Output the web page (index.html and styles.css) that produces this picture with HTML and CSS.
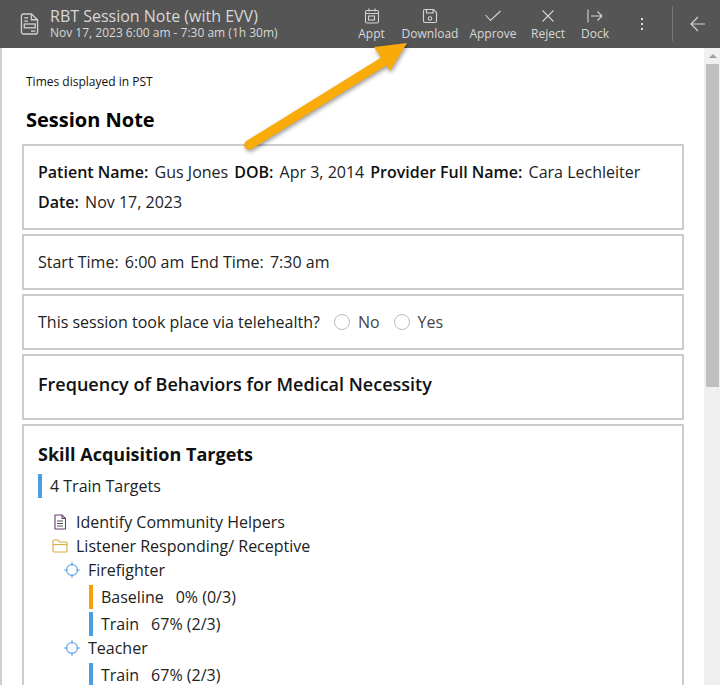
FILE: index.html
```html
<!DOCTYPE html>
<html lang="en">
<head>
<meta charset="utf-8">
<title>RBT Session Note</title>
<link rel="stylesheet" href="styles.css">
</head>
<body>
<div class="app">
  <header class="topbar">
    <div class="doc">
      <svg class="doc-icon" viewBox="0 0 20 24" fill="none" stroke="#d0d0d0" stroke-width="1.4"><path d="M1.500 3.500a2 2 0 0 1 2-2h8.500l6.500 6v13a2 2 0 0 1-2 2h-13a2 2 0 0 1-2-2z"/><path d="M12 1.500v6h6.500M4.500 5.500h4M4.500 9h4"/><rect x="4.500" y="12" width="11.500" height="4"/><path d="M11.500 19.500h4.500"/></svg>
      <div class="doc-text">
        <div class="doc-title">RBT Session Note (with EVV)</div>
        <div class="doc-sub">Nov 17, 2023 6:00 am - 7:30 am (1h 30m)</div>
      </div>
    </div>
    <nav class="actions">
      <div class="action a-appt"><svg viewBox="0 0 16 16" fill="none" stroke="#d4d4d4" stroke-width="1.1"><rect x="1.500" y="2.500" width="13" height="12.500" rx="1.500"/><path d="M1.500 5.500h13M5 .5v3M11 .5v3"/><rect x="4.500" y="8" width="6" height="4"/></svg><span>Appt</span></div>
      <div class="action a-down"><svg viewBox="0 0 16 16" fill="none" stroke="#d4d4d4" stroke-width="1.1"><path d="M1.500 3a1.500 1.500 0 0 1 1.500-1.500h8.500l3 3V13a1.500 1.500 0 0 1-1.500 1.500H3A1.500 1.500 0 0 1 1.500 13z"/><path d="M4.500 1.500v3.500h6.500V1.500"/><circle cx="8" cy="10.500" r="1.800"/></svg><span>Download</span></div>
      <div class="action a-appr"><svg viewBox="0 0 16 16" fill="none" stroke="#d4d4d4" stroke-width="1.1"><path d="M.5 7l5 5.500L15.500 3"/></svg><span>Approve</span></div>
      <div class="action a-rej"><svg viewBox="0 0 16 16" fill="none" stroke="#d4d4d4" stroke-width="1.1"><path d="M2.500 2.500l11 11M13.500 2.500l-11 11"/></svg><span>Reject</span></div>
      <div class="action a-dock"><svg viewBox="0 0 16 16" fill="none" stroke="#d4d4d4" stroke-width="1.1"><path d="M1 1.500v13M4 8h11M10.500 3.500L15 8l-4.500 4.500"/></svg><span>Dock</span></div>
    </nav>
    <div class="more"><i></i><i></i><i></i></div>
    <div class="back"><svg viewBox="0 0 16 16" fill="none" stroke="#d4d4d4" stroke-width="1.2"><path d="M15 8H1M8 1L1 8l7 7"/></svg></div>
  </header>
  <div class="body-row">
    <main class="content">
      <p class="tz">Times displayed in PST</p>
      <h1 class="page-title">Session Note</h1>
      <section class="card card-patient">
        <div class="line">
          <span class="pair"><b>Patient Name:</b> Gus Jones</span>
          <span class="pair"><b>DOB:</b> Apr 3, 2014</span>
          <span class="pair"><b>Provider Full Name:</b> Cara Lechleiter</span>
        </div>
        <div class="line"><span class="pair"><b>Date:</b> Nov 17, 2023</span></div>
      </section>
      <section class="card card-row">
        <div class="line">
          <span class="pair"><span class="lab">Start Time:</span> 6:00 am</span>
          <span class="pair"><span class="lab">End Time:</span> 7:30 am</span>
        </div>
      </section>
      <section class="card card-row">
        <div class="line tele">
          <span>This session took place via telehealth?</span>
          <span class="radio"></span><span class="opt">No</span>
          <span class="radio"></span><span class="opt">Yes</span>
        </div>
      </section>
      <section class="card card-heading">
        <h2>Frequency of Behaviors for Medical Necessity</h2>
      </section>
      <section class="card card-skill">
        <h2 class="strong">Skill Acquisition Targets</h2>
        <div class="phase phase-top">4 Train Targets</div>
        <ul class="tree">
          <li class="node lvl1">
            <svg class="ico" viewBox="0 0 14 16" fill="none" stroke="#6b3f70" stroke-width="1.1"><path d="M2 1h7l3.500 3.500V15H2z"/><path d="M9 1v3.500h3.500"/><path d="M4 7h6M4 9.500h6M4 12h6" stroke="#555"/></svg>
            Identify Community Helpers
          </li>
          <li class="node lvl1">
            <svg class="ico" viewBox="0 0 16 14" fill="none" stroke="#d9ad3c" stroke-width="1.1"><path d="M1 3V2a1 1 0 0 1 1-1h4l1.500 2H14a1 1 0 0 1 1 1v8a1 1 0 0 1-1 1H2a1 1 0 0 1-1-1z"/><path d="M1 5.500h14"/></svg>
            Listener Responding/ Receptive
          </li>
          <li class="node lvl2">
            <svg class="ico" viewBox="0 0 16 16" fill="none" stroke="#5ea3e6" stroke-width="1.1"><circle cx="8" cy="8" r="5.500"/><path d="M8 0v4M8 12v4M0 8h4M12 8h4"/></svg>
            Firefighter
          </li>
          <li class="phase phase-base">Baseline<span class="score">0% (0/3)</span></li>
          <li class="phase phase-train">Train<span class="score">67% (2/3)</span></li>
          <li class="node lvl2">
            <svg class="ico" viewBox="0 0 16 16" fill="none" stroke="#5ea3e6" stroke-width="1.1"><circle cx="8" cy="8" r="5.500"/><path d="M8 0v4M8 12v4M0 8h4M12 8h4"/></svg>
            Teacher
          </li>
          <li class="phase phase-train">Train<span class="score">67% (2/3)</span></li>
        </ul>
      </section>
    </main>
    <div class="scrollbar">
      <div class="sb-arrow"></div>
      <div class="sb-thumb"></div>
    </div>
  </div>
  <svg class="callout" width="720" height="200" viewBox="0 0 720 200" fill="none">
    <path d="M249 145L383 62" stroke="#f9ab0a" stroke-width="9.500" stroke-linecap="round"/>
    <path d="M374 47L407 43L390 71Z" fill="#f9ab0a"/>
  </svg>
</div>
</body>
</html>
```
FILE: styles.css
```css
* { box-sizing: border-box; }
html, body { margin: 0; height: 100%; overflow: hidden; }
body { font-family: "Open Sans", "Liberation Sans", sans-serif; color: #1c1c1c; background: #fff; }
.app { position: relative; width: 720px; height: 685px; display: flex; flex-direction: column; overflow: hidden; }

.topbar { flex: 0 0 48px; height: 48px; background: #555; color: #d8d8d8; display: flex; align-items: stretch; }
.doc { flex: none; width: 356px; display: flex; align-items: center; padding-left: 20px; }
.doc-icon { width: 19px; height: 24px; margin-right: 11px; }
.doc-title { font-size: 16px; line-height: 18px; margin-top: -2px; }
.doc-sub { font-size: 12px; line-height: 15px; }
.actions { display: flex; flex: none; }
.action { display: flex; flex-direction: column; align-items: center; font-size: 12px; line-height: 15px; padding-top: 8px; }
.action svg { width: 16px; height: 16px; margin-bottom: 2px; }
.a-appt { width: 29px; margin-left: 1px; }
.a-down { width: 58px; margin-left: 15px; }
.a-appr { width: 48px; margin-left: 10px; }
.a-rej { width: 36px; margin-left: 13px; }
.a-dock { width: 30px; margin-left: 14px; }
.more { flex: none; margin-left: 31px; width: 4px; display: flex; flex-direction: column; justify-content: center; gap: 3px; }
.more i { display: block; width: 2px; height: 2px; background: #ddd; }
.back { flex: none; margin: 6px 0 7px 27px; padding-left: 17px; border-left: 1px solid #777; display: flex; align-items: center; width: 47px; }
.back svg { width: 16px; height: 16px; }

.body-row { flex: 1; display: flex; min-height: 0; border-left: 2px solid #d0d0d0; }
.content { flex: 1; min-width: 0; overflow: hidden; padding: 0 20px; }
.tz { margin: 26px 0 0 4px; font-size: 12px; line-height: 16px; color: #111; }
.page-title { margin: 16px 0 0 4px; font-size: 20px; line-height: 28px; font-weight: 700; color: #000; }
.card { border: 2px solid #ccc; margin-bottom: 4px; padding: 0 14px; }
.page-title + .card { margin-top: 10px; }
.card-patient { height: 86px; padding-top: 12px; }
.card-row { height: 56px; padding-top: 12px; }
.card-heading { height: 66px; padding-top: 16px; }
.card-skill { padding-top: 16px; height: 300px; }
.line { display: flex; gap: 6px; font-size: 16px; line-height: 28px; color: #222; height: 28px; }
.card-patient .line { height: 29px; margin-bottom: 1px; }
.pair b { font-weight: 600; margin-right: 2px; color: #111; }
.lab { margin-right: 2px; }
.tele { align-items: center; }
.radio { width: 16px; height: 16px; border: 1px solid #bbb; border-radius: 50%; margin: 0 0 0 8px; background: #fff; }
.opt { color: #444; margin-left: 2px; }
h2 { margin: 0; font-size: 18px; line-height: 24px; font-weight: 600; color: #111; }
h2.strong { font-weight: 700; }
.phase { border-left: 4px solid #4d9de0; padding-left: 8px; height: 24px; line-height: 24px; font-size: 16px; color: #222; }
.phase-top { margin-top: 8px; }
.tree { list-style: none; margin: 12px 0 0; padding: 0; }
.node { display: flex; align-items: center; height: 24px; font-size: 16px; color: #222; }
.lvl1 { padding-left: 14px; }
.lvl2 { padding-left: 26px; }
.ico { width: 16px; height: 16px; margin-right: 8px; flex: none; }
.tree .phase { margin-left: 51px; margin-top: 3px; }
.tree .phase-base { border-left-color: #fa9f0a; }
.score { margin-left: 12px; }

.scrollbar { flex: 0 0 16px; background: #f0f0f0; padding: 0 1px 0 2px; }
.sb-arrow { width: 0; height: 0; margin: 6px auto; border-left: 4px solid transparent; border-right: 4px solid transparent; border-bottom: 4px solid #a0a0a0; }
.sb-thumb { width: 13px; height: 323px; background: #c0c0c0; }

.callout { position: absolute; left: 0; top: 0; pointer-events: none; filter: drop-shadow(1px 2px 2px rgba(0, 0, 0, .4)); }
```
